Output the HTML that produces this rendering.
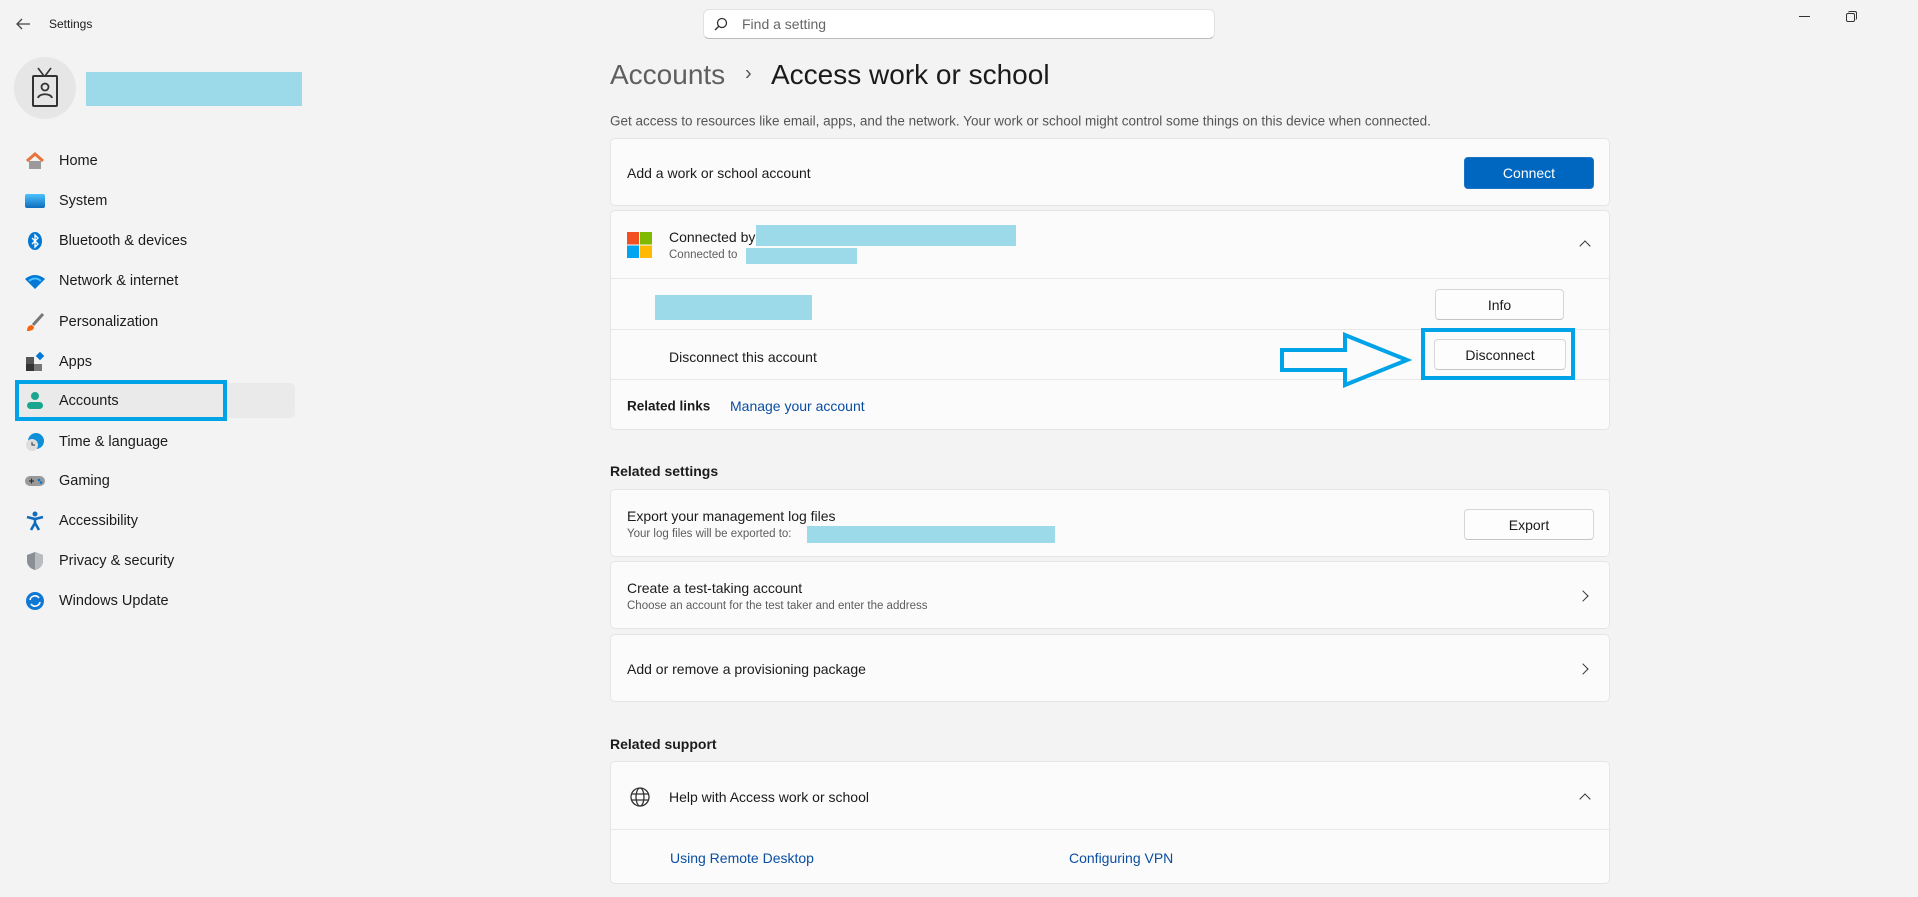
<!DOCTYPE html>
<html><head><meta charset="utf-8"><style>
*{box-sizing:border-box;margin:0;padding:0}
body{width:1918px;height:897px;background:#f3f3f3;font-family:"Liberation Sans",sans-serif;color:#1b1b1b;position:relative;overflow:hidden;font-size:14px}
.a{position:absolute}
.nav{position:absolute;left:59px;font-size:14.5px;color:#1b1b1b;transform:translateY(-50%)}
.ic{position:absolute;left:25px;width:20px;height:20px;transform:translateY(-50%)}
.card{position:absolute;left:610px;width:1000px;background:#fbfbfb;border:1px solid #e5e5e5;border-radius:5px}
.t{position:absolute;transform:translateY(-50%);white-space:nowrap}
.btn{position:absolute;background:#fdfdfd;border:1px solid #d6d6d6;border-bottom-color:#c4c4c4;border-radius:4px;font-size:14px;display:flex;align-items:center;justify-content:center}
.red{position:absolute;background:#9cdaea}
.sep{position:absolute;left:0;right:0;height:1px;background:#e8e8e8}
.sm{font-size:11.5px;color:#5d5d5d}
.link{color:#0a4ea3}
.chev{position:absolute;width:10px;height:10px;border-right:1.5px solid #333;border-bottom:1.5px solid #333}
</style></head><body>
<svg class="a" style="left:15px;top:17px" width="16" height="14"><path d="M15 7H2M7 2L2 7l5 5" stroke="#444" stroke-width="1.3" fill="none"/></svg>
<div class="t" style="left:49px;top:24px;font-size:12px">Settings</div>
<div class="a" style="left:703px;top:9px;width:512px;height:30px;background:#fff;border:1px solid #e2e2e2;border-bottom-color:#bbb;border-radius:6px"></div>
<svg class="a" style="left:714px;top:17px" width="14" height="14"><circle cx="8" cy="6" r="4.5" stroke="#333" stroke-width="1.3" fill="none"/><path d="M5 9l-4 4" stroke="#333" stroke-width="1.4"/></svg>
<div class="t" style="left:742px;top:24px;font-size:14px;color:#666">Find a setting</div>
<div class="a" style="left:1799px;top:16px;width:11px;height:1px;background:#333"></div>
<div class="a" style="left:1846px;top:13px;width:9px;height:9px;border:1px solid #333;border-radius:2px"></div>
<div class="a" style="left:1848px;top:11px;width:9px;height:9px;border-top:1px solid #333;border-right:1px solid #333;border-radius:2px"></div>

<div class="a" style="left:14px;top:57px;width:62px;height:62px;border-radius:50%;background:#e6e6e6"></div>
<svg class="a" style="left:30px;top:66px" width="30" height="44"><path d="M8 2l6 8M21 2l-6 8" stroke="#333" stroke-width="1.6"/><rect x="3" y="10" width="24" height="30" rx="1" stroke="#333" stroke-width="2" fill="none"/><circle cx="15" cy="21" r="3.5" stroke="#333" stroke-width="1.8" fill="none"/><path d="M8 32c1-5 13-5 14 0" stroke="#333" stroke-width="1.8" fill="none"/></svg>
<div class="red" style="left:86px;top:72px;width:216px;height:34px"></div>

<div class="a" style="left:15px;top:383px;width:280px;height:35px;background:#eaeaea;border-radius:5px"></div>
<div class="a" style="left:15px;top:380px;width:212px;height:41px;border:4px solid #00a2e8"></div>

<svg class="ic" style="top:161px" viewBox="0 0 20 20"><path d="M2 10L10 3l8 7" stroke="#e8743b" stroke-width="3" fill="none"/><rect x="4" y="10" width="12" height="8" fill="#9a9a9a"/></svg>
<div class="nav" style="top:161px">Home</div>
<div class="ic" style="top:201px;height:14px;background:linear-gradient(#4cc2ff,#0f6cbd);border-radius:2px"></div>
<div class="nav" style="top:201px">System</div>
<svg class="ic" style="top:241px" viewBox="0 0 20 20"><ellipse cx="10" cy="10" rx="7" ry="9" fill="#0078d4"/><path d="M7 7l6 6-3 3V4l3 3-6 6" stroke="#fff" stroke-width="1.3" fill="none"/></svg>
<div class="nav" style="top:241px">Bluetooth &amp; devices</div>
<svg class="ic" style="top:281px" viewBox="0 0 20 20"><path d="M0 8Q10 0 20 8L10 18Z" fill="#0078d4"/><path d="M4 10Q10 5 16 10" stroke="#4cc2ff" stroke-width="2" fill="none"/></svg>
<div class="nav" style="top:281px">Network &amp; internet</div>
<svg class="ic" style="top:322px" viewBox="0 0 20 20"><path d="M18 2L8 13" stroke="#777" stroke-width="3"/><path d="M2 19c0-4 2-6 5-6l2 2c0 3-3 4-7 4z" fill="#f7630c"/></svg>
<div class="nav" style="top:322px">Personalization</div>
<svg class="ic" style="top:362px" viewBox="0 0 20 20"><rect x="1" y="5" width="8" height="7" fill="#555"/><rect x="1" y="12" width="8" height="7" fill="#333"/><rect x="9" y="12" width="8" height="7" fill="#777"/><rect x="12" y="1" width="6" height="6" fill="#0078d4" transform="rotate(45 15 4)"/></svg>
<div class="nav" style="top:362px">Apps</div>
<svg class="ic" style="top:401px" viewBox="0 0 20 20"><circle cx="10" cy="5" r="4" fill="#1aa58f"/><rect x="2" y="11" width="16" height="7" rx="3.5" fill="#1aa58f"/></svg>
<div class="nav" style="top:401px">Accounts</div>
<svg class="ic" style="top:442px" viewBox="0 0 20 20"><circle cx="11" cy="9" r="8" fill="#0f8fd8"/><circle cx="7" cy="13" r="6" fill="#ddd"/><path d="M7 10v3h3" stroke="#333" stroke-width="1" fill="none"/></svg>
<div class="nav" style="top:442px">Time &amp; language</div>
<svg class="ic" style="top:481px" viewBox="0 0 20 20"><rect x="0" y="5" width="20" height="10" rx="5" fill="#999"/><path d="M4 10h5M6.5 7.5v5" stroke="#333" stroke-width="1.2"/><circle cx="14" cy="9" r="1.3" fill="#0078d4"/><circle cx="16" cy="11.5" r="1.3" fill="#0078d4"/></svg>
<div class="nav" style="top:481px">Gaming</div>
<svg class="ic" style="top:521px" viewBox="0 0 20 20"><circle cx="10" cy="3" r="2.5" fill="#0f6cbd"/><path d="M2 6l8 2 8-2M10 8v4l-4 7M10 12l4 7" stroke="#0f6cbd" stroke-width="2.6" fill="none"/></svg>
<div class="nav" style="top:521px">Accessibility</div>
<svg class="ic" style="top:561px" viewBox="0 0 20 20"><path d="M10 1l8 3v6c0 5-4 8-8 9-4-1-8-4-8-9V4z" fill="#8a8f96"/><path d="M10 1v18c4-1 8-4 8-9V4z" fill="#b8bcc1"/></svg>
<div class="nav" style="top:561px">Privacy &amp; security</div>
<svg class="ic" style="top:601px" viewBox="0 0 20 20"><circle cx="10" cy="10" r="9" fill="#0f78d4"/><path d="M5 9a5 5 0 0 1 9-2M15 11a5 5 0 0 1-9 2" stroke="#fff" stroke-width="1.6" fill="none"/></svg>
<div class="nav" style="top:601px">Windows Update</div>

<div class="t" style="left:610px;top:75px;font-size:28px;color:#5f5f5f">Accounts</div>
<div class="t" style="left:745px;top:74px;font-size:20px;color:#555">›</div>
<div class="t" style="left:771px;top:75px;font-size:28px;color:#1b1b1b">Access work or school</div>
<div class="t" style="left:610px;top:121px;font-size:13.5px;color:#555">Get access to resources like email, apps, and the network. Your work or school might control some things on this device when connected.</div>

<div class="card" style="top:138px;height:68px">
 <div class="t" style="left:16px;top:34px">Add a work or school account</div>
 <div class="btn" style="left:853px;top:18px;width:130px;height:32px;background:#0067c0;border-color:#1a73c6;color:#fff">Connect</div>
</div>

<div class="card" style="top:210px;height:220px">
 <svg class="a" style="left:16px;top:21px" width="25" height="26"><rect x="0" y="0" width="12" height="12.5" fill="#f25022"/><rect x="13" y="0" width="12" height="12.5" fill="#7fba00"/><rect x="0" y="13.5" width="12" height="12.5" fill="#00a4ef"/><rect x="13" y="13.5" width="12" height="12.5" fill="#ffb900"/></svg>
 <div class="t" style="left:58px;top:26px">Connected by</div>
 <div class="red" style="left:145px;top:14px;width:260px;height:21px"></div>
 <div class="t sm" style="left:58px;top:44px">Connected to</div>
 <div class="red" style="left:135px;top:37px;width:111px;height:16px"></div>
 <div class="chev" style="left:970px;top:31px;transform:rotate(-135deg);width:8px;height:8px"></div>
 <div class="sep" style="top:67px"></div>
 <div class="red" style="left:44px;top:84px;width:157px;height:25px"></div>
 <div class="btn" style="left:824px;top:78px;width:129px;height:31px">Info</div>
 <div class="sep" style="top:118px"></div>
 <div class="t" style="left:58px;top:146px">Disconnect this account</div>
 <div class="btn" style="left:823px;top:128px;width:132px;height:31px">Disconnect</div>
 <div class="sep" style="top:168px"></div>
 <div class="t" style="left:16px;top:195px;font-weight:bold;font-size:13.5px">Related links</div>
 <div class="t link" style="left:119px;top:195px">Manage your account</div>
</div>
<div class="a" style="left:1421px;top:328px;width:154px;height:52px;border:4px solid #00a2e8"></div>
<svg class="a" style="left:1279px;top:332px" width="134" height="60"><path d="M3 18H66V3L128 28L66 53V38H3Z" fill="none" stroke="#00a2e8" stroke-width="4"/></svg>

<div class="t" style="left:610px;top:471px;font-weight:bold;font-size:14px">Related settings</div>
<div class="card" style="top:489px;height:68px">
 <div class="t" style="left:16px;top:26px">Export your management log files</div>
 <div class="t sm" style="left:16px;top:44px">Your log files will be exported to:</div>
 <div class="red" style="left:196px;top:36px;width:248px;height:17px"></div>
 <div class="btn" style="left:853px;top:19px;width:130px;height:31px">Export</div>
</div>
<div class="card" style="top:561px;height:68px">
 <div class="t" style="left:16px;top:26px">Create a test-taking account</div>
 <div class="t sm" style="left:16px;top:44px">Choose an account for the test taker and enter the address</div>
 <div class="chev" style="left:968px;top:30px;transform:rotate(-45deg);width:8px;height:8px"></div>
</div>
<div class="card" style="top:634px;height:68px">
 <div class="t" style="left:16px;top:34px">Add or remove a provisioning package</div>
 <div class="chev" style="left:968px;top:30px;transform:rotate(-45deg);width:8px;height:8px"></div>
</div>

<div class="t" style="left:610px;top:744px;font-weight:bold;font-size:14px">Related support</div>
<div class="card" style="top:761px;height:123px">
 <svg class="a" style="left:18px;top:24px" width="22" height="22" viewBox="0 0 22 22"><g stroke="#333" stroke-width="1.3" fill="none"><circle cx="11" cy="11" r="9"/><ellipse cx="11" cy="11" rx="4" ry="9"/><path d="M2 8h18M2 14h18"/></g></svg>
 <div class="t" style="left:58px;top:35px">Help with Access work or school</div>
 <div class="chev" style="left:970px;top:33px;transform:rotate(-135deg);width:8px;height:8px"></div>
 <div class="sep" style="top:67px"></div>
 <div class="t link" style="left:59px;top:96px">Using Remote Desktop</div>
 <div class="t link" style="left:458px;top:96px">Configuring VPN</div>
</div>
</body></html>
